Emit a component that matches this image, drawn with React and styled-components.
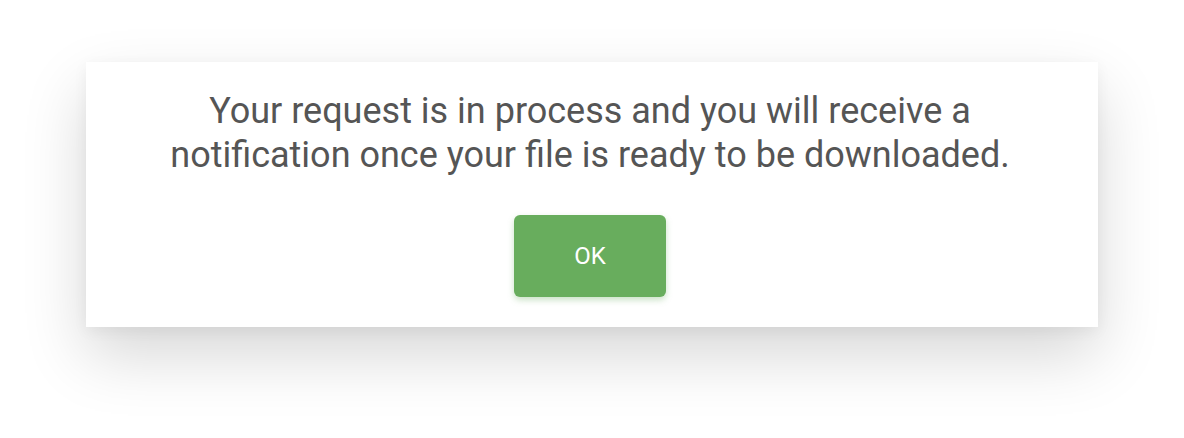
import React from 'react'
import styled, { createGlobalStyle } from 'styled-components'

const Global = createGlobalStyle`
body{
    margin:0;
    background:#ffffff;
    font-family:Roboto, "Liberation Sans", sans-serif;
}
`

const Page = styled.div`
width:100%;
height:438px;
display:flex;
justify-content:center;
align-items:flex-start;
padding-top:62px;
box-sizing:border-box;
`

const Dialog = styled.div`
width:1012px;
height:265px;
box-sizing:border-box;
background:#ffffff;
box-shadow:0 28px 60px rgba(0,0,0,0.16), 0 4px 14px rgba(0,0,0,0.05);
display:flex;
flex-direction:column;
align-items:center;
padding-top:27px;
padding-right:4px;
`

const Message = styled.p`
margin:0;
font-size:36px;
line-height:44px;
color:#555555;
text-align:center;
`

const OkButton = styled.button`
margin-top:38px;
width:152px;
height:82px;
border:none;
border-radius:6px;
background:#68ad5d;
color:#ffffff;
font-family:Roboto, "Liberation Sans", sans-serif;
font-size:24px;
box-shadow:0 3px 6px rgba(104,173,93,0.35);
cursor:pointer;
`

const App = () => {
    return (
        <Page>
            <Global />
            <Dialog>
                <Message>
                    Your request is in process and you will receive a<br />
                    notification once your file is ready to be downloaded.
                </Message>
                <OkButton>OK</OkButton>
            </Dialog>
        </Page>
    )
}

export default App
